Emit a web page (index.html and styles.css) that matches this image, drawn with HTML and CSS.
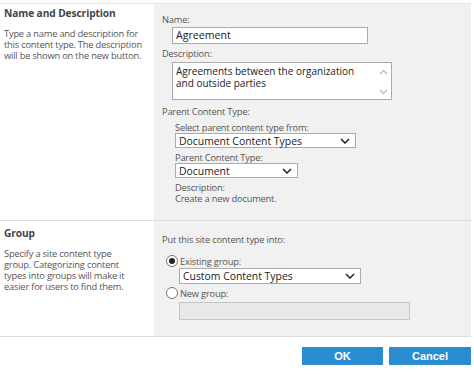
FILE: index.html
```html
<!DOCTYPE html>
<html>
<head>
<meta charset="utf-8">
<link rel="stylesheet" href="styles.css">
</head>
<body>
<div class="form">
  <div class="section first">
    <div class="label-col">
      <div class="sec-title">Name and Description</div>
      <div class="sec-desc">Type a name and description for<br>this content type. The description<br>will be shown on the new button.</div>
    </div>
    <div class="field-col">
      <div class="lbl">Name:</div>
      <div class="input name-input">Agreement</div>
      <div class="lbl">Description:</div>
      <div class="textarea">
        <div class="ta-text">Agreements between the organization and outside parties</div>
        <div class="ta-scroll">
          <svg width="9" height="6" viewBox="0 0 9 6"><path d="M1 5 L4.5 1.5 L8 5" fill="none" stroke="#b8b8b8" stroke-width="1.2"/></svg>
          <svg width="9" height="6" viewBox="0 0 9 6"><path d="M1 1 L4.5 4.5 L8 1" fill="none" stroke="#b8b8b8" stroke-width="1.2"/></svg>
        </div>
      </div>
      <div class="lbl pct">Parent Content Type:</div>
      <div class="indent">
        <div class="lbl">Select parent content type from:</div>
        <div class="select sel1"><span>Document Content Types</span><svg width="10" height="6" viewBox="0 0 10 6"><path d="M1 1 L5 5 L9 1" fill="none" stroke="#222" stroke-width="1.5"/></svg></div>
        <div class="lbl">Parent Content Type:</div>
        <div class="select sel2"><span>Document</span><svg width="10" height="6" viewBox="0 0 10 6"><path d="M1 1 L5 5 L9 1" fill="none" stroke="#222" stroke-width="1.5"/></svg></div>
        <div class="lbl">Description:</div>
        <div class="lbl">Create a new document.</div>
      </div>
    </div>
  </div>
  <div class="section second">
    <div class="label-col">
      <div class="sec-title">Group</div>
      <div class="sec-desc">Specify a site content type<br>group. Categorizing content<br>types into groups will make it<br>easier for users to find them.</div>
    </div>
    <div class="field-col">
      <div class="lbl">Put this site content type into:</div>
      <div class="radio-row first-radio"><span class="radio checked"></span><span class="lbl">Existing group:</span></div>
      <div class="select sel3"><span>Custom Content Types</span><svg width="10" height="6" viewBox="0 0 10 6"><path d="M1 1 L5 5 L9 1" fill="none" stroke="#222" stroke-width="1.5"/></svg></div>
      <div class="radio-row"><span class="radio"></span><span class="lbl">New group:</span></div>
      <div class="input disabled"></div>
    </div>
  </div>
  <div class="buttons">
    <div class="btn">OK</div>
    <div class="btn">Cancel</div>
  </div>
</div>
</body>
</html>
```
FILE: styles.css
```css
* { box-sizing: border-box; }
html, body { margin: 0; padding: 0; background: #fff; }
body { font-family: "Open Sans", "Noto Sans", sans-serif; color: #444; font-size: 9.3px; }
.form { width: 471px; margin-top: 3px; border-top: 1px solid #e2e2e2; }
.section { display: flex; }
.section.first { height: 216px; }
.section.second { height: 117px; border-top: 1px solid #dcdcdc; border-bottom: 1px solid #dcdcdc; }
.label-col { width: 154px; padding: 3px 4px 0 4px; }
.second .label-col { padding-top: 6px; }
.sec-title { font-weight: bold; font-size: 10.2px; color: #444; line-height: 13px; letter-spacing: -0.1px; }
.sec-desc { margin-top: 8px; line-height: 11px; font-size: 9.3px; letter-spacing: -0.2px; color: #555; white-space: nowrap; }
.field-col { flex: 1; background: #f1f1f1; padding: 10px 0 0 8px; }
.second .field-col { padding-top: 13px; }
.lbl { line-height: 11px; font-size: 9.3px; letter-spacing: -0.2px; color: #555; }
.input { background: #fff; border: 1px solid #ababab; height: 17px; line-height: 15px; padding-left: 3px; font-size: 10.6px; color: #222; }
.name-input { width: 196px; margin: 2px 0 4px 10px; }
.textarea { width: 220px; height: 38px; margin: 3px 0 6px 10px; background: #fff; border: 1px solid #ababab; display: flex; }
.ta-text { flex: 1; font-size: 10px; color: #222; line-height: 12px; padding: 2px 3px; }
.ta-scroll { width: 16px; display: flex; flex-direction: column; justify-content: space-between; align-items: center; padding: 6px 0 4px; }
.pct { margin-bottom: 5px; }
.indent { padding-left: 13px; }
.select { background: #fff; border: 1px solid #ababab; height: 15px; display: flex; align-items: center; justify-content: space-between; padding: 0 5px 0 3px; font-size: 10.4px; color: #222; margin: 0 0 2px 0; }
.sel1 { width: 181px; margin-bottom: 4px; }
.sel2 { width: 123px; margin-bottom: 4px; }
.sel3 { width: 182px; height: 16px; margin: 0 0 2px 17px; }
.radio-row { display: flex; align-items: center; margin: 3px 0 1px 4px; gap: 2px; }
.radio-row.first-radio { margin-top: 10px; }
.radio { width: 12px; height: 12px; border-radius: 50%; border: 1px solid #777; background: #fff; display: inline-block; position: relative; }
.radio.checked::after { content: ""; position: absolute; left: 2px; top: 2px; width: 6px; height: 6px; border-radius: 50%; background: #222; }
.disabled { width: 231px; height: 18px; margin: 3px 0 0 17px; background: #e8e8e8; border-color: #c6c6c6; }
.buttons { display: flex; justify-content: flex-end; gap: 6px; padding-top: 10px; }
.btn { width: 81px; height: 18px; background: #2a8dd4; color: #fff; font-family: "Liberation Sans", Arial, sans-serif; font-weight: bold; font-size: 11px; display: flex; align-items: center; justify-content: center; }
.btn:last-child { width: 82px; }
```
